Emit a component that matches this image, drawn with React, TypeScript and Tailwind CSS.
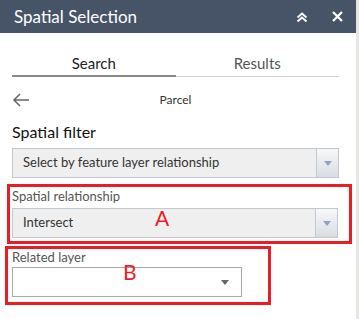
import { useState } from "react";

// Spatial Selection widget panel (Search tab)

function ArrowButton() {
  return (
    <div className="flex h-full w-[22px] items-center justify-center border-l border-[#c3c7ce] bg-gradient-to-b from-[#f7f8f9] to-[#d9dde2]">
      <svg width="8" height="5" viewBox="0 0 8 5">
        <path d="M0 0h8L4 5z" fill="#8ea4c4" />
      </svg>
    </div>
  );
}

function GraySelect({ value }: { value: string }) {
  return (
    <div className="flex h-[30px] items-stretch border border-[#c3c7ce] bg-[#efefef]">
      <div className="flex flex-1 items-center pl-[10px] text-[13px] text-[#333]">{value}</div>
      <ArrowButton />
    </div>
  );
}

export default function App() {
  const [tab, setTab] = useState("search");
  const tabs = [
    { key: "search", label: "Search" },
    { key: "results", label: "Results" },
  ];

  return (
    <div className="flex h-[319px] w-[359px] bg-[#e6e7e3]" style={{ fontFamily: "Lato, 'Open Sans', sans-serif" }}>
      <div className="h-full w-[356px] bg-white">
        {/* Title bar */}
        <div className="flex h-[33px] items-center bg-[#475467] pl-[14px] pr-[13px] text-white">
          <span className="flex-1 text-[17px]">Spatial Selection</span>
          <svg width="12" height="12" viewBox="0 0 12 12" className="mr-[24px]">
            <path d="M1.5 6.5L6 2.5l4.5 4M1.5 10.5L6 6.5l4.5 4" fill="none" stroke="white" strokeWidth="1.8" />
          </svg>
          <svg width="11" height="11" viewBox="0 0 11 11">
            <path d="M1 1l9 9M10 1l-9 9" stroke="white" strokeWidth="2.2" />
          </svg>
        </div>

        <div className="pl-[12px] pr-[17px]">
          {/* Tabs */}
          <div className="mt-[19px] flex">
            {tabs.map((t) => (
              <button
                key={t.key}
                onClick={() => setTab(t.key)}
                className={
                  tab === t.key
                    ? "flex h-[25px] flex-1 items-start justify-center border-b-2 border-[#8a8a8a] text-[15px] text-[#222]"
                    : "flex h-[25px] flex-1 items-start justify-center border-b-2 border-transparent text-[15px] text-[#555]"
                }
              >
                <span className={tab === t.key ? "" : "relative"}>{t.label}</span>
              </button>
            ))}
          </div>
          <div className="-mt-[1px] h-[1px] w-full bg-[#cfcfcf]" />

          {/* Back + layer name */}
          <div className="mt-[15px] flex h-[16px] items-center">
            <svg width="18" height="14" viewBox="0 0 18 14">
              <path d="M17 7H2M8 1L2 7l6 6" fill="none" stroke="#666" strokeWidth="1.5" />
            </svg>
            <span className="flex-1 pr-[18px] text-center text-[12px] text-[#333]">Parcel</span>
          </div>

          <div className="mt-[14px] text-[16px] leading-[20px] text-[#111]">Spatial filter</div>
          <div className="mt-[6px]">
            <GraySelect value="Select by feature layer relationship" />
          </div>
        </div>

        {/* Box A */}
        <div className="ml-[7px] mr-[4px] mt-[6px] border-[3px] border-[#ec1c24] pb-[3px] pl-[2px] pr-[11px]">
          <div className="text-[13px] leading-[18px] text-[#555]">Spatial relationship</div>
          <div className="relative mt-[3px]">
            <GraySelect value="Intersect" />
            <span className="absolute left-[143px] top-[-2px] text-[21px] leading-[24px] text-[#ec1c24]">A</span>
          </div>
        </div>

        {/* Box B */}
        <div className="ml-[5px] mt-[2px] w-[266px] border-[3px] border-[#ec1c24] pb-[5px] pl-[4px] pr-[26px]">
          <div className="text-[13px] leading-[16px] text-[#555]">Related layer</div>
          <div className="relative mt-[2px] flex h-[30px] items-center justify-end border border-[#a9a9a9] bg-white pr-[12px]">
            <svg width="8" height="5" viewBox="0 0 8 5">
              <path d="M0 0h8L4 5z" fill="#666" />
            </svg>
            <span className="absolute left-[110px] top-[-8px] text-[21px] leading-[24px] text-[#ec1c24]">B</span>
          </div>
        </div>
      </div>
    </div>
  );
}
